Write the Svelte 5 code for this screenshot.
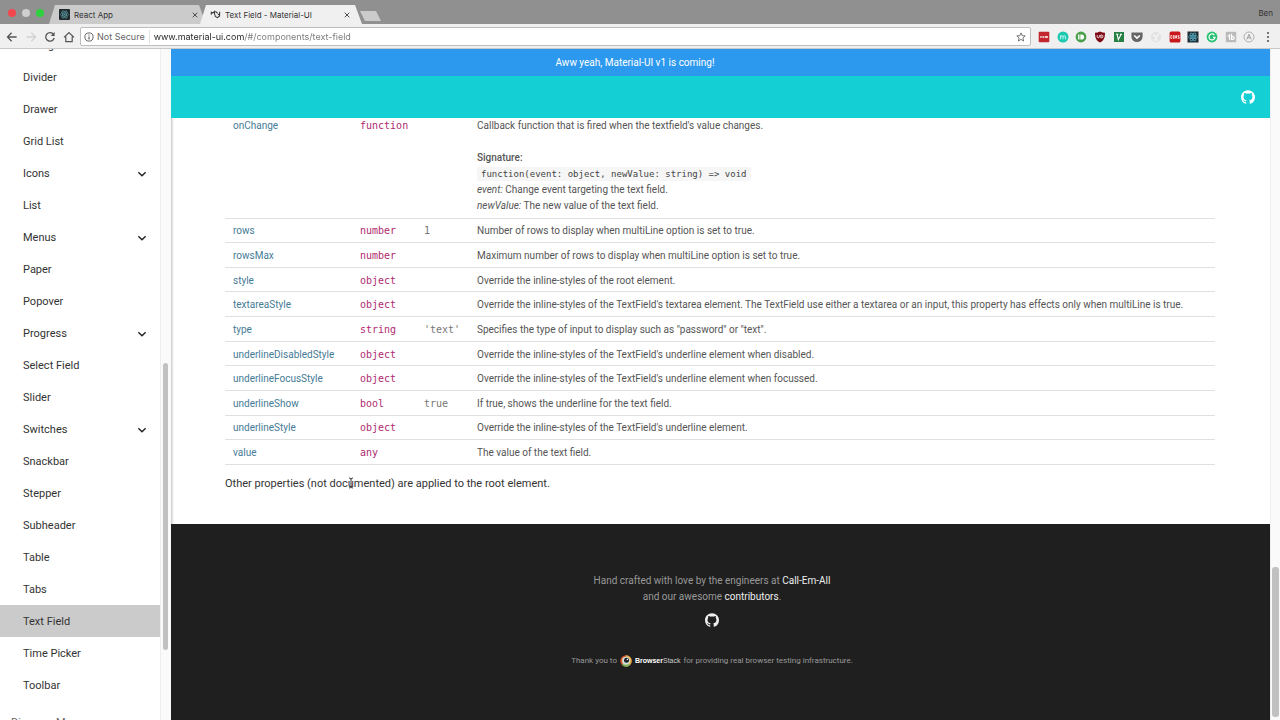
<script>
  const links = [
    { label: 'Dialog' },
    { label: 'Divider' },
    { label: 'Drawer' },
    { label: 'Grid List' },
    { label: 'Icons', nested: true },
    { label: 'List' },
    { label: 'Menus', nested: true },
    { label: 'Paper' },
    { label: 'Popover' },
    { label: 'Progress', nested: true },
    { label: 'Select Field' },
    { label: 'Slider' },
    { label: 'Switches', nested: true },
    { label: 'Snackbar' },
    { label: 'Stepper' },
    { label: 'Subheader' },
    { label: 'Table' },
    { label: 'Tabs' },
    { label: 'Text Field', active: true },
    { label: 'Time Picker' },
    { label: 'Toolbar' },
  ];

  const rows = [
    ['rows', 'number', '1', 'Number of rows to display when multiLine option is set to true.'],
    ['rowsMax', 'number', '', 'Maximum number of rows to display when multiLine option is set to true.'],
    ['style', 'object', '', 'Override the inline-styles of the root element.'],
    ['textareaStyle', 'object', '', "Override the inline-styles of the TextField's textarea element. The TextField use either a textarea or an input, this property has effects only when multiLine is true."],
    ['type', 'string', "'text'", 'Specifies the type of input to display such as "password" or "text".'],
    ['underlineDisabledStyle', 'object', '', "Override the inline-styles of the TextField's underline element when disabled."],
    ['underlineFocusStyle', 'object', '', "Override the inline-styles of the TextField's underline element when focussed."],
    ['underlineShow', 'bool', 'true', 'If true, shows the underline for the text field.'],
    ['underlineStyle', 'object', '', "Override the inline-styles of the TextField's underline element."],
    ['value', 'any', '', 'The value of the text field.'],
  ];

  const extensions = ['dots', 'm', 'pushbullet', 'ublock', 'vim', 'pocket', 'pale', 'cors', 'react', 'grammarly', 'fb', 'a', 'menu'];
</script>

{#snippet github()}
  <svg class="github" viewBox="0 0 24 24" aria-hidden="true">
    <path fill="currentColor" d="M12 .297c-6.63 0-12 5.373-12 12 0 5.303 3.438 9.8 8.205 11.385.6.113.82-.258.82-.577 0-.285-.01-1.04-.015-2.04-3.338.724-4.042-1.61-4.042-1.61C4.422 18.07 3.633 17.7 3.633 17.7c-1.087-.744.084-.729.084-.729 1.205.084 1.838 1.236 1.838 1.236 1.07 1.835 2.809 1.305 3.495.998.108-.776.417-1.305.76-1.605-2.665-.3-5.466-1.332-5.466-5.93 0-1.31.465-2.38 1.235-3.22-.135-.303-.54-1.523.105-3.176 0 0 1.005-.322 3.3 1.23.96-.267 1.98-.399 3-.405 1.02.006 2.04.138 3 .405 2.28-1.552 3.285-1.23 3.285-1.23.645 1.653.24 2.873.12 3.176.765.84 1.23 1.91 1.23 3.22 0 4.61-2.805 5.625-5.475 5.92.42.36.81 1.096.81 2.22 0 1.606-.015 2.896-.015 3.286 0 .315.21.69.825.57C20.565 22.092 24 17.592 24 12.297c0-6.627-5.373-12-12-12" />
  </svg>
{/snippet}

{#snippet reactMark(stroke)}
  <g fill="none" stroke={stroke} stroke-width="0.7">
    <ellipse cx="6" cy="6" rx="4.6" ry="1.8" />
    <ellipse cx="6" cy="6" rx="4.6" ry="1.8" transform="rotate(60 6 6)" />
    <ellipse cx="6" cy="6" rx="4.6" ry="1.8" transform="rotate(120 6 6)" />
  </g>
  <circle cx="6" cy="6" r="0.9" fill={stroke} />
{/snippet}

{#snippet cross()}
  <svg viewBox="0 0 6 6" width="6" height="6" aria-hidden="true"><path d="M.7.7l4.6 4.6M5.3.7L.7 5.3" stroke="#4c4c4c" stroke-width="1" /></svg>
{/snippet}

<div class="window">
  <header class="browser">
    <div class="strip">
      <div class="lights"><i class="close"></i><i class="min"></i><i class="max"></i></div>
      <div class="tab idle">
        <svg class="favicon" viewBox="0 0 12 12" aria-hidden="true"><rect width="12" height="12" rx="1" fill="#20282c" />{@render reactMark('#5b9da2')}</svg>
        <span>React App</span>
        <button aria-label="Close React App">{@render cross()}</button>
      </div>
      <div class="tab current">
        <svg class="favicon" viewBox="0 0 12 12" aria-hidden="true"><path d="M1 3.2l2 1.2L5 2.6v3.6M1.4 3v3.2M6 2.6l2.4 2.2M10.5 3v4.6L8 9.4 5.6 8V6.4M8.6 6.4l1.7-1" fill="none" stroke="#333" stroke-width="1.1" /></svg>
        <span>Text Field - Material-UI</span>
        <button aria-label="Close Text Field">{@render cross()}</button>
      </div>
      <button class="newtab" aria-label="New tab"></button>
      <span class="profile">Ben</span>
    </div>
    <div class="toolbar">
      <nav class="moves" aria-label="History">
        <button aria-label="Back"><svg viewBox="0 0 12 12"><path d="M10.6 6H1.8M5.6 1.8L1.5 6l4.1 4.2" fill="none" stroke="#555" stroke-width="1.3" /></svg></button>
        <button aria-label="Forward"><svg viewBox="0 0 12 12"><path d="M1.4 6h8.8M6.4 1.8L10.5 6l-4.1 4.2" fill="none" stroke="#d2d2d2" stroke-width="1.3" /></svg></button>
        <button aria-label="Reload"><svg viewBox="0 0 12 12"><path d="M9.6 3.4A4.3 4.3 0 1 0 10.2 7" fill="none" stroke="#555" stroke-width="1.3" /><path d="M10.6 1v4H6.7z" fill="#555" /></svg></button>
        <button aria-label="Home"><svg viewBox="0 0 12 12"><path d="M1 6.4L6 1.6l5 4.8M2.8 5.4v5.2h6.4V5.4" fill="none" stroke="#555" stroke-width="1.2" /></svg></button>
      </nav>
      <div class="address">
        <svg class="info" viewBox="0 0 10 10" aria-hidden="true"><circle cx="5" cy="5" r="4.1" fill="none" stroke="#555" stroke-width=".9" /><path d="M5 4.4v3M5 2.4v1.1" stroke="#555" stroke-width="1.1" /></svg>
        <span class="secure">Not Secure</span>
        <input aria-label="Address" value="www.material-ui.com/#/components/text-field" />
        <button class="star" aria-label="Bookmark"><svg viewBox="0 0 10 10"><path d="M5 .9l1.2 2.8 3 .2L6.9 6l.7 3L5 7.4 2.4 9l.7-3L.8 3.9l3-.2z" fill="none" stroke="#555" stroke-width=".8" /></svg></button>
      </div>
      <div class="extensions">
        {#each extensions as name}
          <button aria-label={name}>
            <svg viewBox="0 0 12 12">
              {#if name === 'dots'}
                <rect x=".7" y=".7" width="10.6" height="10.6" rx=".8" fill="#c1272d" /><path d="M2.2 6h1.5M4.4 6h1.5M6.6 6h1.5M9 5v2" stroke="#fff" stroke-width="1.4" />
              {:else if name === 'm'}
                <circle cx="6" cy="6" r="5.5" fill="#1fc8b0" /><path d="M3.6 8.3V4.3M3.6 5.4q1.2-1.2 2.4 0v2.9M6 5.4q1.2-1.2 2.4 0v2.9" fill="none" stroke="#d5fff7" stroke-width=".9" />
              {:else if name === 'pushbullet'}
                <circle cx="6" cy="6" r="5.4" fill="#4a9f4d" /><path d="M3.8 3.4v5.2" stroke="#fff" stroke-width="1.4" /><path d="M5.3 3.4h1.2a2.6 2.6 0 0 1 0 5.2H5.3z" fill="#fff" />
              {:else if name === 'ublock'}
                <path d="M6 .4Q8.5 1.700 11 1.700C11 7 9.8 9.4 6 11.600 2.2 9.4 1 7 1 1.700Q3.5 1.700 6 .4z" fill="#7d0b14" /><path d="M3.200 4.200v1.500q.1 1 1.100 1t1.100-1V4.200M6.800 4v2.800h.6q1.600-.1 1.600-1.400T7.400 4z" fill="none" stroke="#fff" stroke-width=".9" />
              {:else if name === 'vim'}
                <rect x="1" y="1" width="10" height="10" fill="#278044" /><path d="M3 3.300h2.400M4.200 3.500l1.100 5.200L8 3.500M7 3.300h2" fill="none" stroke="#fff" stroke-width="1.100" />
              {:else if name === 'pocket'}
                <path d="M.4 1.600h11.200v4a5.600 5.400 0 0 1-11.200 0z" fill="#666" /><path d="M3.200 4.500L6 7.200l2.800-2.700" fill="none" stroke="#fff" stroke-width="1.600" />
              {:else if name === 'pale'}
                <circle cx="6" cy="6" r="5.200" fill="#e3e3e3" /><path d="M3 3.500l3 2.700 3-3.400M6 6.200v2.600M3.600 9h4" fill="none" stroke="#f7f7f7" stroke-width="1.200" />
              {:else if name === 'cors'}
                <rect x=".6" y=".6" width="10.800" height="10.800" rx="1.500" fill="#c8181c" /><path d="M3 4.600H1.800v2.800H3M4.200 4.600h1v2.800h-1zM6.700 7.600v-3h1v1.300h-1M8 7.600L7.200 6M10.400 4.600H9.200V6h1v1.400H9" fill="none" stroke="#fff" stroke-width=".8" />
              {:else if name === 'react'}
                <rect x=".5" y=".5" width="11" height="11" fill="#202a31" />{@render reactMark('#56b6cd')}
              {:else if name === 'grammarly'}
                <circle cx="6" cy="6" r="5.400" fill="#26c172" /><path d="M8.300 4A3 3 0 1 0 9 6.300H7" fill="none" stroke="#fff" stroke-width="1.200" />
              {:else if name === 'fb'}
                <rect x=".8" y=".8" width="10.400" height="10.400" fill="#bababa" /><path d="M4.600 3.200v5.600M2.600 4.800h2M6.600 2.800v5.600h1.200q1.400 0 1.400-1.400T7.800 5.600H6.600" fill="none" stroke="#fff" stroke-width="1.200" />
              {:else if name === 'a'}
                <circle cx="6" cy="6" r="5" fill="none" stroke="#a9a9a9" stroke-width=".9" /><path d="M3.900 8.400L6 3.300l2.100 5.100M4.700 6.800h2.600" fill="none" stroke="#999" stroke-width=".9" />
              {:else}
                <g fill="#5a5a5a"><circle cx="6" cy="2" r="1.100" /><circle cx="6" cy="6" r="1.100" /><circle cx="6" cy="10" r="1.100" /></g>
              {/if}
            </svg>
          </button>
        {/each}
      </div>
    </div>
  </header>

  <div class="page">
    <aside>
      <nav class="menu" aria-label="Components">
        {#each links as link}
          <a href="#{link.label}" class:active={link.active}>
            <span>{link.label}</span>
            {#if link.nested}
              <svg viewBox="0 0 10 10" aria-hidden="true"><path d="M1.4 3.2L5 6.8l3.6-3.6" fill="none" stroke="#222" stroke-width="1.4" /></svg>
            {/if}
          </a>
        {/each}
        <h2>Discover More</h2>
      </nav>
      <div class="track"><div class="thumb side"></div></div>
    </aside>

    <main>
      <div class="banner">Aww yeah, Material-UI v1 is coming!</div>
      <div class="appbar"><a href="#github" aria-label="GitHub">{@render github()}</a></div>
      <section class="content">
        <table>
          <colgroup><col class="name" /><col class="type" /><col class="default" /><col /></colgroup>
          <tbody>
            <tr class="signature">
              <td>onChange</td>
              <td>function</td>
              <td></td>
              <td>
                Callback function that is fired when the textfield's value changes.<br /><br />
                <b>Signature:</b><br />
                <code>function(event: object, newValue: string) =&gt; void</code><br />
                <em>event:</em> Change event targeting the text field.<br />
                <em>newValue:</em> The new value of the text field.
              </td>
            </tr>
            {#each rows as [name, type, initial, text]}
              <tr><td>{name}</td><td>{type}</td><td>{initial}</td><td>{text}</td></tr>
            {/each}
          </tbody>
        </table>
        <p>Other properties (not documented) are applied to the root element.
          <svg class="cursor" viewBox="0 0 6 12" aria-hidden="true"><path d="M1 1q2 0 2 1.2Q3 1 5 1M3 2v8M1 11q2 0 2-1.2Q3 11 5 11" fill="none" stroke="#222" stroke-width=".9" /></svg>
        </p>
      </section>
      <footer>
        <p>Hand crafted with love by the engineers at <a href="#call-em-all">Call-Em-All</a><br />and our awesome <a href="#contributors">contributors</a>.</p>
        <a href="#github" aria-label="GitHub">{@render github()}</a>
        <p class="thanks">
          <span>Thank you to</span>
          <svg class="eye" viewBox="0 0 12 12" aria-hidden="true"><circle cx="6" cy="6" r="5.7" fill="#d9532f" /><path d="M6 .3a5.7 5.7 0 0 1 0 11.4z" fill="#e6b34a" /><path d="M10 10A5.7 5.7 0 0 1 2 10L6 6z" fill="#74b35b" /><circle cx="6" cy="5.8" r="4" fill="#d5ddd0" /><circle cx="6.5" cy="5.2" r="2.5" fill="#1e2430" /><circle cx="7.4" cy="4.400" r=".7" fill="#fff" /></svg>
          <span class="brand"><b>Browser</b>Stack</span>
          <span>for providing real browser testing infrastructure.</span>
        </p>
      </footer>
    </main>
    <div class="track outer"><div class="thumb main"></div></div>
  </div>
</div>

<style>
  :global(body) { margin: 0; overflow: hidden; background: #fff; }
  * { box-sizing: border-box; }
  button { display: flex; align-items: center; justify-content: center; margin: 0; padding: 0; border: 0; background: none; }
  svg { display: block; flex: none; }
  p, h2 { margin: 0; }
  a { color: inherit; text-decoration: none; }

  .window { display: flex; flex-direction: column; height: 100vh; font: 11px/16px Roboto, sans-serif; color: #333; }

  .browser { flex: none; font-family: Inter, Roboto, sans-serif; }
  .strip { display: flex; align-items: flex-end; height: 24px; background: #909090; }
  .lights { display: flex; gap: 6px; padding: 0 5px 7px 8px; }
  .lights i { width: 8px; height: 8px; border-radius: 50%; }
  .close { background: #f2484d; }
  .min { background: #cfcfcf; }
  .max { background: #2cd13d; }
  .tab { display: flex; align-items: center; gap: 4px; height: 19px; padding: 0 7px 0 10px; font-size: 8px; color: #333; clip-path: polygon(6px 0, calc(100% - 7px) 0, 100% 100%, 0 100%); }
  .tab span { flex: 1; white-space: nowrap; }
  .tab button { width: 8px; height: 12px; }
  .idle { width: 157px; background: #cbcbcb; }
  .current { width: 162px; margin-left: -6px; padding-right: 11px; background: #f0f0f0; }
  .favicon { width: 11px; height: 11px; }
  .newtab { width: 21px; height: 10px; margin: 0 0 3px -2px; background: #cbcbcb; clip-path: polygon(0 0, 16px 0, 100% 100%, 5px 100%); }
  .profile { margin-left: auto; padding: 0 7px 3px 0; font-size: 8px; }

  .toolbar { display: flex; align-items: center; height: 25px; padding: 1px 6px 0; border-bottom: 1px solid #c9c9c9; background: #f0f0f0; }
  .moves { display: flex; gap: 7px; margin-right: 5px; }
  .moves button, .moves svg { width: 12px; height: 12px; }
  .address { display: flex; flex: 1; align-items: center; height: 19px; padding: 0 4px 0 3px; border: 1px solid #bdbdbd; border-radius: 2px; background: #fff; font-size: 9px; }
  .info { width: 10px; height: 10px; margin-right: 3px; }
  .secure { padding-right: 4px; border-right: 1px solid #e2e2e2; color: #666; line-height: 14px; }
  input { flex: 1; min-width: 0; margin: 0 0 0 4px; padding: 0; border: 0; outline: 0; background: linear-gradient(90deg, #222 90px, #777 90px); background-clip: text; -webkit-text-fill-color: transparent; color: transparent; font: inherit; }
  .star svg { width: 10px; height: 10px; }
  .extensions { display: flex; justify-content: space-between; width: 236px; margin-left: 7px; }
  .extensions svg { width: 12px; height: 12px; }

  .page { display: flex; flex: 1; min-height: 0; }
  aside { position: relative; z-index: 3; display: flex; width: 171px; overflow: hidden; background: #fff; }
  .menu { flex: 1; margin-top: -20px; color: #333; }
  .menu a { display: flex; align-items: center; justify-content: space-between; height: 32px; padding: 2px 13px 0 23px; }
  .menu .active { background: #cbcbcb; }
  .menu svg { width: 10px; height: 10px; }
  h2 { padding: 14px 11px 0; color: #666; font-size: 11px; font-weight: 400; line-height: 16px; }
  .track { display: flex; flex-direction: column; justify-content: flex-end; width: 11px; padding: 0 3px 0 2px; border-left: 1px solid #eee; background: #fafafa; }
  .thumb { border-radius: 3px; background: #c1c1c1; }
  .side { height: 287px; margin-bottom: 70px; }
  .outer { width: 10px; padding: 0 1px; }
  .thumb.main { height: 150px; margin-bottom: 3px; }

  main { display: flex; flex: 1; flex-direction: column; min-width: 0; overflow: hidden; box-shadow: inset 3px 0 3px -2px #bbb; }
  .banner { position: relative; z-index: 2; flex: none; padding: 6px 171px 5px 0; background: #2d99ee; color: #fff; font-size: 10px; text-align: center; }
  .appbar { position: relative; z-index: 2; display: flex; flex: none; align-items: center; justify-content: flex-end; height: 42px; padding-right: 15px; background: #14cfd4; color: #fff; }
  .github { width: 14px; height: 14px; }

  .content { flex: 1; margin-top: -1px; padding: 0 55px 0 54px; }
  table { width: 100%; height: 348px; border-collapse: collapse; table-layout: fixed; font-size: 10px; color: #555; }
  .name { width: 127px; }
  .type { width: 64px; }
  .default { width: 53px; }
  td { padding: 2px 8px 0; border-bottom: 1px solid #e0e0e0; vertical-align: middle; }
  .signature { height: 101px; }
  .signature td { padding-top: 1px; vertical-align: top; }
  td:nth-child(1) { color: #457b96; }
  td:nth-child(2), td:nth-child(3) { font-family: "DejaVu Sans Mono", monospace; }
  td:nth-child(2) { color: #b02a70; }
  td:nth-child(3) { color: #777; }
  td:nth-child(4) { white-space: nowrap; }
  b { font-weight: 500; }
  code { padding: 2px 4px; border-radius: 2px; background: #f6f6f6; font: 9px/14px "DejaVu Sans Mono", monospace; color: #444; }
  .content p { position: relative; padding-top: 11px; }
  .cursor { position: absolute; left: 123px; top: 12px; width: 6px; height: 12px; }

  footer { display: flex; flex: none; flex-direction: column; align-items: center; height: 196px; padding: 49px 17px 0 0; background: #1f1f1f; color: #999; font-size: 10px; text-align: center; }
  footer a { color: #eee; }
  footer > a { margin-top: 8px; }
  .thanks { display: flex; align-items: center; gap: 3px; margin-top: 26px; font-size: 8px; }
  .eye { width: 12px; height: 12px; }
  .brand { color: #ccc; font-family: "Liberation Sans", sans-serif; font-size: 7px; }
  .brand b { color: #fff; font-weight: 700; }
</style>
